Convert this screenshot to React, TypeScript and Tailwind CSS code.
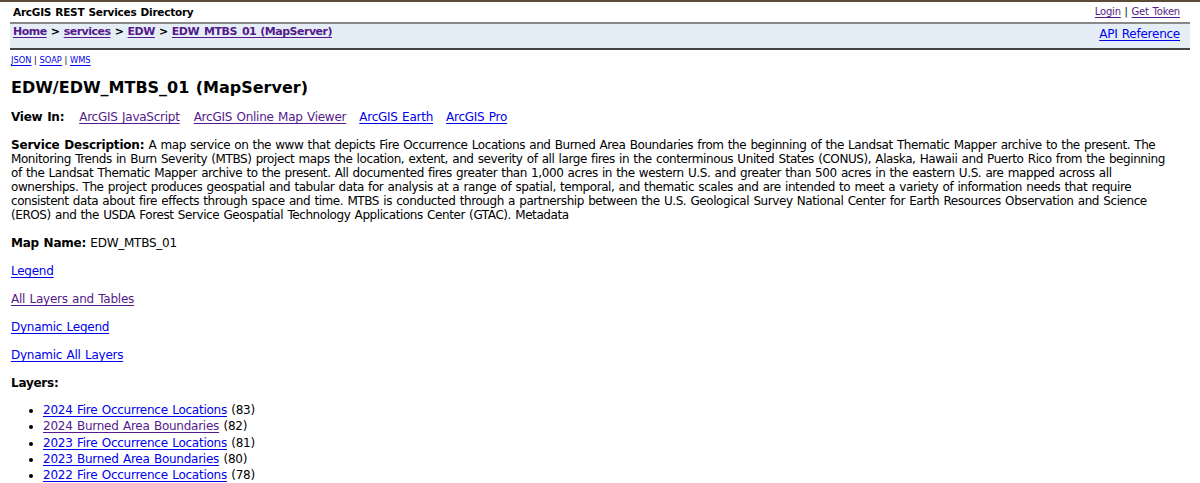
const blue = "text-[#0000ee] underline underline-offset-2";
const visited = "text-[#551a8b] underline underline-offset-2";

const layers = [
  { name: "2024 Fire Occurrence Locations", id: 83, seen: false },
  { name: "2024 Burned Area Boundaries", id: 82, seen: true },
  { name: "2023 Fire Occurrence Locations", id: 81, seen: false },
  { name: "2023 Burned Area Boundaries", id: 80, seen: false },
  { name: "2022 Fire Occurrence Locations", id: 78, seen: false },
];

export default function App() {
  return (
    <div
      className="min-h-screen bg-white text-black border-t-2 border-[#5b4a36] text-[12px] leading-[14px] tracking-[-0.25px] [word-spacing:0.8px]"
      style={{ fontFamily: '"DejaVu Sans", Verdana, sans-serif' }}
    >
      {/* header */}
      <div className="flex items-center justify-between pl-[13px] pr-[20px] h-[20px]">
        <span className="font-bold text-[10.5px] tracking-[-0.25px]">ArcGIS REST Services Directory</span>
        <span className="text-[10px] tracking-[-0.2px]">
          <a className={visited}>Login</a> | <a className={visited}>Get Token</a>
        </span>
      </div>

      <div className="mx-[10px] flex justify-between bg-[#e5eef7] border-t-2 border-b-2 border-t-[#888] border-b-[#444] h-[28px] px-[3px]">
        <div className="font-bold text-[11px] tracking-[-0.5px] pt-[1px]">
          <a className={visited}>Home</a> &gt; <a className={visited}>services</a> &gt;{" "}
          <a className={visited}>EDW</a> &gt; <a className={visited}>EDW_MTBS_01 (MapServer)</a>
        </div>
        <div className="pt-[3px] pr-[7px]">
          <a className={blue}>API Reference</a>
        </div>
      </div>

      <main className="px-[11px]">
        <div className="text-[8.3px] leading-[10px] tracking-normal [word-spacing:0] mt-[5px]">
          <a className={blue}>JSON</a> | <a className={blue}>SOAP</a> | <a className={blue}>WMS</a>
        </div>

        <h2 className="font-bold text-[16px] leading-[20px] tracking-normal mt-[13px]">EDW/EDW_MTBS_01 (MapServer)</h2>

        <p className="mt-[12px]">
          <b>View In:</b>
          <a className={`${visited} ml-[15px]`}>ArcGIS JavaScript</a>
          <a className={`${visited} ml-[14px]`}>ArcGIS Online Map Viewer</a>
          <a className={`${blue} ml-[13px]`}>ArcGIS Earth</a>
          <a className={`${blue} ml-[13px]`}>ArcGIS Pro</a>
        </p>

        <p className="mt-[14px] whitespace-nowrap tracking-[-0.42px]">
          <b className="tracking-[-0.2px]">Service Description:</b> A map service on the www that depicts Fire
          Occurrence Locations and Burned Area Boundaries from the beginning of the Landsat Thematic Mapper archive to
          the present. The
          <br />
          Monitoring Trends in Burn Severity (MTBS) project maps the location, extent, and severity of all large fires in
          the conterminous United States (CONUS), Alaska, Hawaii and Puerto Rico from the beginning
          <br />
          of the Landsat Thematic Mapper archive to the present. All documented fires greater than 1,000 acres in the
          western U.S. and greater than 500 acres in the eastern U.S. are mapped across all
          <br />
          ownerships. The project produces geospatial and tabular data for analysis at a range of spatial, temporal, and
          thematic scales and are intended to meet a variety of information needs that require
          <br />
          consistent data about fire effects through space and time. MTBS is conducted through a partnership between the
          U.S. Geological Survey National Center for Earth Resources Observation and Science
          <br />
          (EROS) and the USDA Forest Service Geospatial Technology Applications Center (GTAC). Metadata
        </p>

        <p className="mt-[14px]">
          <b>Map Name:</b> EDW_MTBS_01
        </p>
        <p className="mt-[14px]">
          <a className={blue}>Legend</a>
        </p>
        <p className="mt-[14px]">
          <a className={visited}>All Layers and Tables</a>
        </p>
        <p className="mt-[14px]">
          <a className={blue}>Dynamic Legend</a>
        </p>
        <p className="mt-[14px]">
          <a className={blue}>Dynamic All Layers</a>
        </p>
        <p className="mt-[14px] font-bold">Layers:</p>

        <ul className="mt-[12px] pl-[32px] list-disc leading-[16.25px]">
          {layers.map((l) => (
            <li key={l.id}>
              <a className={l.seen ? visited : blue}>{l.name}</a> ({l.id})
            </li>
          ))}
        </ul>
      </main>
    </div>
  );
}
